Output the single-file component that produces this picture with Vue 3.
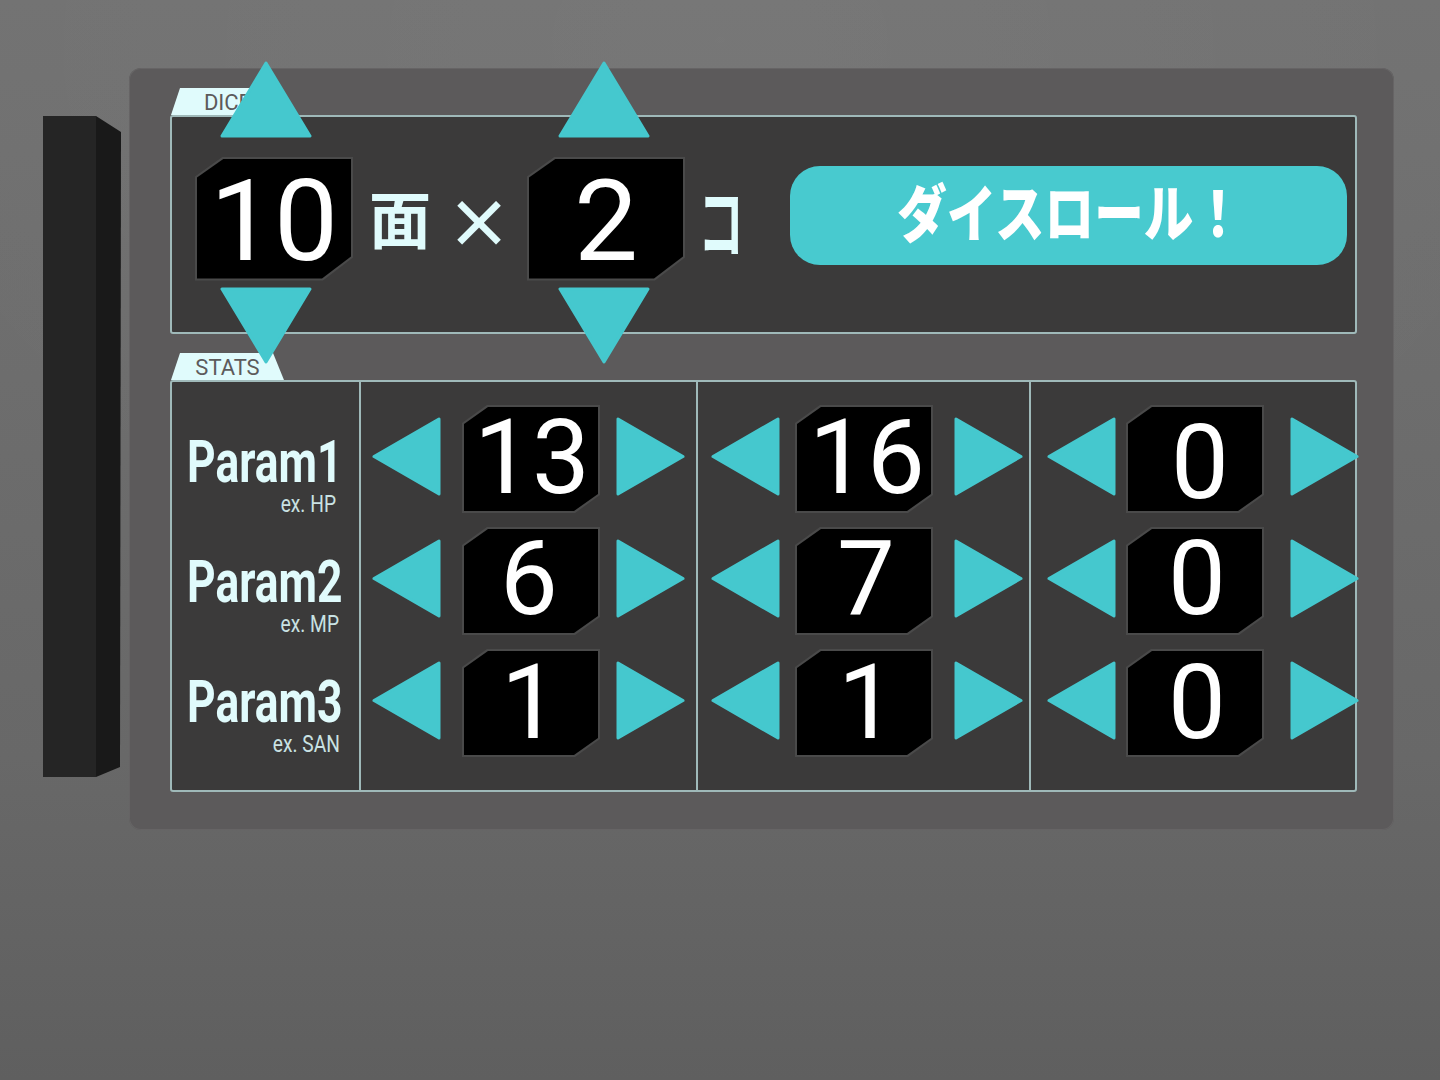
<script setup>
const columns = [
  { key: 'c1', cells: [
    { v: 13, dx: 1, dy: -2 }, { v: 6, dx: -2, dy: -3 }, { v: 1, dx: -1, dy: -1 } ] },
  { key: 'c2', cells: [
    { v: 16, dx: 3, dy: -2 }, { v: 7, dx: 2, dy: -3 }, { v: 1, dx: 3, dy: -1 } ] },
  { key: 'c3', cells: [
    { v: 0, dx: 5, dy: 3 }, { v: 0, dx: 2, dy: -3 }, { v: 0, dx: 2, dy: -1 } ] }
]
const params = [
  { name: 'Param1', sub: 'ex. HP' },
  { name: 'Param2', sub: 'ex. MP' },
  { name: 'Param3', sub: 'ex. SAN' }
]
const nudge = (c) => ({ transform: `translate(${c.dx}px, ${c.dy}px)` })
</script>

<template>
  <div class="stage">
    <svg class="pillar" width="78" height="661" viewBox="0 0 78 661">
      <polygon points="0,0 53,0 53,661 0,661" fill="#252525" />
      <polygon points="53,0 78,16 77,651 53,661" fill="#191919" />
    </svg>

    <div class="panel">
      <div class="tab"><span>DICE</span></div>
      <section class="box dice">
        <div class="stepper">
          <svg class="tri up" width="92" height="77" viewBox="0 0 92 77"><polygon points="46,2 90,75 2,75" /></svg>
          <div class="num big"><div class="num-in big"><span>10</span></div></div>
          <svg class="tri down" width="92" height="77" viewBox="0 0 92 77"><polygon points="2,2 90,2 46,75" /></svg>
        </div>
        <span class="glyph men">面</span>
        <span class="times">×</span>
        <div class="stepper second">
          <svg class="tri up" width="92" height="77" viewBox="0 0 92 77"><polygon points="46,2 90,75 2,75" /></svg>
          <div class="num big"><div class="num-in big"><span>2</span></div></div>
          <svg class="tri down" width="92" height="77" viewBox="0 0 92 77"><polygon points="2,2 90,2 46,75" /></svg>
        </div>
        <span class="glyph ko">コ</span>
        <button class="roll"><span>ダイスロール！</span></button>
      </section>

      <div class="tab stats-tab"><span>STATS</span></div>
      <section class="box stats">
        <div class="labels">
          <div v-for="p in params" :key="p.name" class="label">
            <div class="name">{{ p.name }}</div>
            <div class="sub">{{ p.sub }}</div>
          </div>
        </div>
        <div v-for="col in columns" :key="col.key" class="col" :class="col.key">
          <div v-for="(c, i) in col.cells" :key="i" class="row">
            <svg class="arrow" width="69" height="79" viewBox="0 0 69 79"><polygon points="67,2 67,77 2,39.5" /></svg>
            <div class="num"><div class="num-in"><span :style="nudge(c)">{{ c.v }}</span></div></div>
            <svg class="arrow" width="69" height="79" viewBox="0 0 69 79"><polygon points="2,2 2,77 67,39.5" /></svg>
          </div>
        </div>
      </section>
    </div>
  </div>
</template>

<style scoped>
.stage {
  width: 1440px;
  height: 1080px;
  box-sizing: border-box;
  padding: 68px 0 0 43px;
  display: flex;
  align-items: flex-start;
  gap: 8px;
  overflow: hidden;
  background:
    radial-gradient(ellipse 900px 620px at 720px 40px, rgba(255, 255, 255, 0.04), rgba(255, 255, 255, 0) 100%),
    linear-gradient(180deg, #727272 0%, #686868 70%, #5f5f5f 100%);
  font-family: Roboto, "Liberation Sans", sans-serif;
}
.pillar {
  flex: none;
  margin-top: 48px;
}
.panel {
  flex: none;
  box-sizing: border-box;
  width: 1265px;
  height: 762px;
  padding: 20px 36px 0 41px;
  background: #5c5a5b;
  border-radius: 12px;
  box-shadow: inset 0 0 0 1px #666465;
}
.tab {
  width: 113px;
  height: 27px;
  margin-left: 1px;
  background: #e0fbfc;
  clip-path: polygon(9px 0, 102px 0, 113px 100%, 0 100%);
  color: #5c5a5b;
  font-size: 22px;
  line-height: 29px;
  text-align: center;
}
.tab span {
  display: inline-block;
}
.stats-tab {
  margin-top: 19px;
}
.box {
  box-sizing: border-box;
  width: 1187px;
  background: #3b3a3a;
  border: 2px solid #9fb9b9;
  border-radius: 3px;
}
.dice {
  height: 219px;
  display: flex;
  align-items: center;
  padding: 0 8px 12px 23px;
}
.stepper {
  position: relative;
  flex: none;
}
.tri {
  position: absolute;
  left: 25px;
  z-index: 2;
  fill: #45c8ce;
}
.second .tri {
  left: 31px;
}
.tri polygon,
.arrow polygon {
  stroke: #45c8ce;
  stroke-width: 3;
  stroke-linejoin: round;
}
.tri.up {
  top: -96px;
}
.tri.down {
  top: 130px;
}
.num {
  flex: none;
  box-sizing: border-box;
  width: 138px;
  height: 108px;
  padding: 2px;
  background: #4a4a4a;
  clip-path: polygon(25px 0, 100% 0, 100% calc(100% - 18px), calc(100% - 25px) 100%, 0 100%, 0 18px);
}
.num.big {
  width: 158px;
  height: 124px;
  clip-path: polygon(28px 0, 100% 0, 100% calc(100% - 23px), calc(100% - 30px) 100%, 0 100%, 0 20px);
}
.num-in {
  width: 100%;
  height: 100%;
  background: #000;
  clip-path: polygon(24px 0, 100% 0, 100% calc(100% - 17px), calc(100% - 24px) 100%, 0 100%, 0 17px);
  color: #fff;
  font-size: 103px;
  display: flex;
  align-items: center;
  justify-content: center;
  line-height: 1;
}
.num-in span {
  display: block;
}
.num-in.big {
  font-size: 114px;
  clip-path: polygon(27px 0, 100% 0, 100% calc(100% - 22px), calc(100% - 29px) 100%, 0 100%, 0 19px);
}
.num-in.big span {
  transform: translateY(2px);
}
.glyph,
.times {
  flex: none;
  color: #e0fbfc;
  font-family: "Noto Sans CJK JP", sans-serif;
  font-weight: 700;
  line-height: 1;
}
.men {
  font-size: 62px;
  width: 62px;
  margin-left: 16px;
  margin-bottom: 4px;
}
.times {
  font-size: 66px;
  font-weight: 700;
  width: 66px;
  margin-left: 15px;
  margin-right: 15px;
  text-align: center;
}
.ko {
  font-size: 60px;
  width: 60px;
  margin-left: 6px;
  transform: scale(0.76, 1.28);
}
.roll {
  flex: none;
  width: 557px;
  height: 99px;
  margin-left: 39px;
  margin-bottom: 6px;
  border: none;
  padding: 0;
  background: #48cacf;
  border-radius: 30px;
  color: #fff;
  font-family: "Noto Sans CJK JP", sans-serif;
  font-weight: 900;
  font-size: 62px;
  line-height: 1;
  overflow: hidden;
}
.roll span {
  display: inline-block;
  white-space: nowrap;
  transform: translate(2px, -6px) scale(0.8, 1);
}
.stats {
  height: 412px;
  display: grid;
  grid-template-columns: 189px 337px 333px 1fr;
  grid-template-rows: minmax(0, 1fr);
}
.labels {
  padding: 52px 0 0 15px;
  border-right: 2px solid #9fb9b9;
  box-sizing: border-box;
}
.label {
  height: 120px;
  box-sizing: border-box;
}
.name {
  height: 56px;
  color: #e0fbfc;
  font-weight: 700;
  font-size: 60px;
  line-height: 56px;
  white-space: nowrap;
  transform: scaleX(0.74);
  transform-origin: 0 0;
}
.sub {
  width: 149px;
  color: #c9e2e3;
  font-size: 24px;
  line-height: 28px;
  white-space: nowrap;
  text-align: right;
  transform: scaleX(0.8);
  transform-origin: 100% 0;
}
.label:nth-child(2) .sub { width: 152px; }
.label:nth-child(3) .sub { width: 153px; }
.col {
  box-sizing: border-box;
  padding-top: 23px;
  border-right: 2px solid #9fb9b9;
}
.col:last-child {
  border-right: none;
}
.row {
  display: flex;
  align-items: center;
  height: 108px;
  margin-bottom: 14px;
}
.arrow {
  flex: none;
  fill: #45c8ce;
  display: block;
  margin-bottom: 5px;
}
.c1 { padding-left: 11px; }
.c1 .num { margin: 0 16px 0 21px; }
.c2 { padding-left: 13px; }
.c2 .num { margin: 0 21px 0 15px; }
.c3 { padding-left: 16px; }
.c3 .num { margin: 0 26px 0 10px; }
</style>
